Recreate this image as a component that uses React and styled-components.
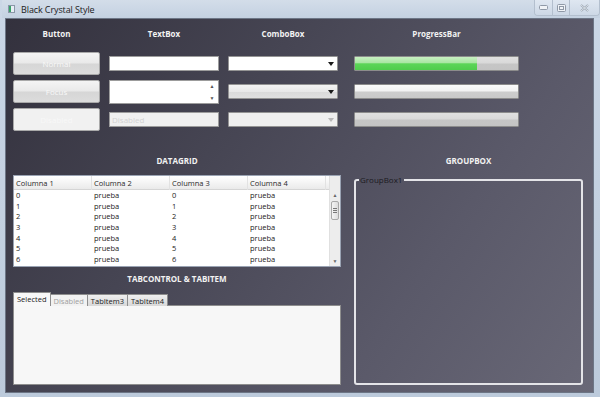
import React from 'react'
import styled, { createGlobalStyle, css } from 'styled-components'

const GlobalStyle = createGlobalStyle`
  html, body {
    margin: 0;
    padding: 0;
    width: 600px;
    height: 397px;
    overflow: hidden;
  }
  body {
    font-family: "Open Sans", "Noto Sans", "Liberation Sans", sans-serif;
  }
  * { box-sizing: border-box; }
`

const Window = styled.div`
  width: 600px;
  height: 397px;
  display: flex;
  flex-direction: column;
  background: linear-gradient(180deg, #cbd7e6 0%, #bccadb 100%);
  padding: 0 6px 4px 5px;
`

const TitleBar = styled.div`
  height: 18px;
  display: flex;
  align-items: center;
  margin-left: -3px;
  margin-right: -6px;
  background: linear-gradient(180deg, #d3dde9 0%, #c4d1e1 100%);
`

const AppIcon = styled.div`
  width: 7px;
  height: 8px;
  margin: 0 6px 0 6px;
  border: 1px solid #8a97a8;
  background: linear-gradient(90deg, #3aa36a 0 40%, #e8eef5 40% 100%);
`

const Title = styled.span`
  font-size: 9px;
  color: #1c1c1c;
  letter-spacing: -0.1px;
`

const Caption = styled.div`
  margin-left: auto;
  height: 16px;
  align-self: flex-start;
  display: flex;
  border: 1px solid #b3bfce;
  border-top: none;
  border-radius: 0 0 4px 4px;
  overflow: hidden;
`

const CapButton = styled.div`
  width: ${p => p.$w}px;
  display: flex;
  align-items: center;
  justify-content: center;
  background: linear-gradient(180deg, #dfe7f1 0%, #cdd8e6 100%);
  & + & { border-left: 1px solid #b3bfce; }
`

const Client = styled.div`
  flex: 1;
  border: 1px solid #6d7686;
  background: linear-gradient(125deg, #33313d 0%, #464553 35%, #5a5969 70%, #696877 100%);
  padding: 9px 0 0 7px;
  display: flex;
  flex-direction: column;
`

const Controls = styled.div`
  display: grid;
  grid-template-columns: 87px 110px 110px 172px;
  grid-template-rows: 19px 23px 23px 23px;
  column-gap: 9px;
  row-gap: 5px;
  align-items: center;
`

const Heading = styled.div`
  width: 100%;
  color: #f2f2f2;
  font-size: 8px;
  font-weight: 700;
  text-align: center;
  line-height: 12px;
  align-self: start;
  ${p => p.$wide && css`
    width: 165px;
    justify-self: end;
  `}
`

const Button = styled.div`
  height: 23px;
  border: 1px solid #a9a9a9;
  border-radius: 2px;
  display: flex;
  align-items: center;
  justify-content: center;
  font-size: 8px;
  color: #f8f8f8;
  background: ${p => p.$disabled
    ? '#f1f1f1'
    : 'linear-gradient(180deg, #f4f4f4 0%, #e9e9e9 48%, #d6d6d6 52%, #dcdcdc 100%)'};
`

const TextBox = styled.div`
  height: ${p => p.$tall ? 24 : 15}px;
  border: 1px solid #9c9c9c;
  background: ${p => p.$disabled ? '#f0f0f0' : '#ffffff'};
  position: relative;
  font-size: 8px;
  color: #d2d2d2;
  padding-left: 2px;
  line-height: 13px;
`

const Spin = styled.div`
  position: absolute;
  right: 2px;
  top: 2px;
  bottom: 2px;
  width: 8px;
  display: flex;
  flex-direction: column;
  justify-content: space-between;
  align-items: center;
  font-size: 5px;
  line-height: 6px;
  color: #555;
`

const ComboBox = styled.div`
  height: 15px;
  border: 1px solid #949494;
  border-radius: 1px;
  display: flex;
  align-items: center;
  justify-content: flex-end;
  padding-right: 3px;
  background: ${p => p.$variant === 'normal'
    ? '#ffffff'
    : p.$variant === 'focus'
      ? 'linear-gradient(180deg, #f3f3f3 0%, #e8e8e8 50%, #dadada 52%, #e0e0e0 100%)'
      : '#efefef'};
`

const Arrow = styled.div`
  width: 0;
  height: 0;
  border-left: 3px solid transparent;
  border-right: 3px solid transparent;
  border-top: 4px solid ${p => p.$faint ? '#b8b8b8' : '#1a1a1a'};
`

const Progress = styled.div`
  width: 165px;
  justify-self: end;
  height: 15px;
  border: 1px solid #8c8c8c;
  border-radius: 1px;
  overflow: hidden;
  background: ${p => p.$light
    ? 'linear-gradient(180deg, #fbfbfb 0%, #f2f2f2 48%, #cdcdcd 52%, #c9c9c9 100%)'
    : 'linear-gradient(180deg, #e0e0e0 0%, #d9d9d9 48%, #c6c6c6 52%, #c4c4c4 100%)'};
`

const Fill = styled.div`
  height: 100%;
  background: linear-gradient(180deg, #c8f0c3 0%, #a9e6a2 45%, #5cd558 52%, #4fcd4c 100%);
`

const Lower = styled.div`
  display: grid;
  grid-template-columns: 328px 229px;
  column-gap: 13px;
  margin-top: 24px;
  align-items: start;
`

const Column = styled.div`
  display: flex;
  flex-direction: column;
`

const Grid = styled.div`
  margin-top: 8px;
  height: 92px;
  border: 1px solid #9aa3b3;
  background: #fff;
  display: flex;
  font-size: 7.5px;
  color: #1a1a1a;
  overflow: hidden;
`

const GridBody = styled.div`
  flex: 1;
  display: flex;
  flex-direction: column;
`

const HeaderRow = styled.div`
  display: grid;
  grid-template-columns: repeat(4, 78px);
  height: 14px;
  background: linear-gradient(180deg, #ffffff 0%, #f5f5f5 50%, #eaeaea 100%);
  border-bottom: 1px solid #d5d5d5;
`

const HeaderCell = styled.div`
  padding-left: 2px;
  line-height: 14px;
  color: #2a2a2a;
  border-right: 1px solid #e2e2e2;
`

const Row = styled.div`
  display: grid;
  grid-template-columns: repeat(4, 78px);
  height: 10.7px;
  line-height: 10.7px;
`

const Cell = styled.div`
  padding-left: 2px;
  white-space: nowrap;
`

const ScrollBar = styled.div`
  width: 11px;
  background: #ededed;
  border-left: 1px solid #e0e0e0;
  display: flex;
  flex-direction: column;
  align-items: center;
  padding-top: 16px;
  font-size: 5px;
  color: #666;
`

const Thumb = styled.div`
  width: 8px;
  height: 19px;
  margin-top: 3px;
  border: 1px solid #a8a8a8;
  border-radius: 2px;
  background: linear-gradient(90deg, #f4f4f4, #dcdcdc);
  display: flex;
  flex-direction: column;
  justify-content: center;
  align-items: center;
  gap: 1px;
  & > i {
    display: block;
    width: 4px;
    height: 1px;
    background: #777;
  }
`

const TabHeading = styled(Heading)`
  margin-top: 6px;
`

const TabStrip = styled.div`
  margin-top: 7px;
  display: flex;
  align-items: flex-end;
  height: 14px;
`

const Tab = styled.div`
  height: ${p => p.$selected ? 14 : 12}px;
  padding: 0 3px;
  font-size: 7.5px;
  line-height: 12px;
  border: 1px solid #8e8e8e;
  border-bottom: none;
  margin-right: -1px;
  color: ${p => p.$disabled ? '#a0a0a0' : '#1a1a1a'};
  background: ${p => p.$selected
    ? '#f8f8f8'
    : p.$disabled
      ? '#f2f2f2'
      : 'linear-gradient(180deg, #efefef 0%, #d8d8d8 100%)'};
  position: relative;
  z-index: ${p => p.$selected ? 1 : 0};
`

const TabPanel = styled.div`
  height: 80px;
  border: 1px solid #8e8e8e;
  background: #f7f7f7;
  margin-top: -1px;
`

const GroupBox = styled.fieldset`
  margin: 8px 0 0 0;
  height: 210px;
  border: 2px solid #e4e4e8;
  border-radius: 3px;
  padding: 0;
  min-width: 0;
`

const Legend = styled.legend`
  font-size: 8px;
  color: #1b1a21;
  padding: 0 2px 0 1px;
  margin-left: 3px;
  line-height: 9px;
`

const rows = [0, 1, 2, 3, 4, 5, 6]

export default function App() {
  return (
    <>
      <GlobalStyle />
      <Window>
        <TitleBar>
          <AppIcon />
          <Title>Black Crystal Style</Title>
          <Caption>
            <CapButton $w={17}>
              <svg width="9" height="5"><rect x="0.5" y="0.5" width="8" height="4" rx="1" fill="#f0f3f7" stroke="#8f99a7" /></svg>
            </CapButton>
            <CapButton $w={17}>
              <svg width="9" height="8"><rect x="0.5" y="0.5" width="8" height="7" rx="1" fill="#f0f3f7" stroke="#8f99a7" /><rect x="2.5" y="2.5" width="4" height="3" fill="none" stroke="#8f99a7" /></svg>
            </CapButton>
            <CapButton $w={30}>
              <svg width="9" height="8"><path d="M1 1 L8 7 M8 1 L1 7" stroke="#99a3b0" strokeWidth="2" /><path d="M1 1 L8 7 M8 1 L1 7" stroke="#eef2f6" strokeWidth="0.8" /></svg>
            </CapButton>
          </Caption>
        </TitleBar>
        <Client>
          <Controls>
            <Heading>Button</Heading>
            <Heading>TextBox</Heading>
            <Heading>ComboBox</Heading>
            <Heading $wide>ProgressBar</Heading>

            <Button>Normal</Button>
            <TextBox />
            <ComboBox $variant="normal"><Arrow /></ComboBox>
            <Progress><Fill style={{ width: '75%' }} /></Progress>

            <Button>Focus</Button>
            <TextBox $tall>
              <Spin><span>▲</span><span>▼</span></Spin>
            </TextBox>
            <ComboBox $variant="focus"><Arrow /></ComboBox>
            <Progress $light />

            <Button $disabled>Disabled</Button>
            <TextBox $disabled>Disabled</TextBox>
            <ComboBox $variant="disabled"><Arrow $faint /></ComboBox>
            <Progress />
          </Controls>

          <Lower>
            <Column>
              <Heading>DATAGRID</Heading>
              <Grid>
                <GridBody>
                  <HeaderRow>
                    <HeaderCell>Columna 1</HeaderCell>
                    <HeaderCell>Columna 2</HeaderCell>
                    <HeaderCell>Columna 3</HeaderCell>
                    <HeaderCell>Columna 4</HeaderCell>
                  </HeaderRow>
                  {rows.map(n => (
                    <Row key={n}>
                      <Cell>{n}</Cell>
                      <Cell>prueba</Cell>
                      <Cell>{n}</Cell>
                      <Cell>prueba</Cell>
                    </Row>
                  ))}
                </GridBody>
                <ScrollBar>
                  <span>▲</span>
                  <Thumb><i /><i /><i /></Thumb>
                  <span style={{ marginTop: 'auto', marginBottom: 2 }}>▼</span>
                </ScrollBar>
              </Grid>
              <TabHeading>TABCONTROL &amp; TABITEM</TabHeading>
              <TabStrip>
                <Tab $selected>Selected</Tab>
                <Tab $disabled>Disabled</Tab>
                <Tab>TabItem3</Tab>
                <Tab>TabItem4</Tab>
              </TabStrip>
              <TabPanel />
            </Column>
            <Column>
              <Heading>GROUPBOX</Heading>
              <GroupBox>
                <Legend>GroupBox1</Legend>
              </GroupBox>
            </Column>
          </Lower>
        </Client>
      </Window>
    </>
  )
}
